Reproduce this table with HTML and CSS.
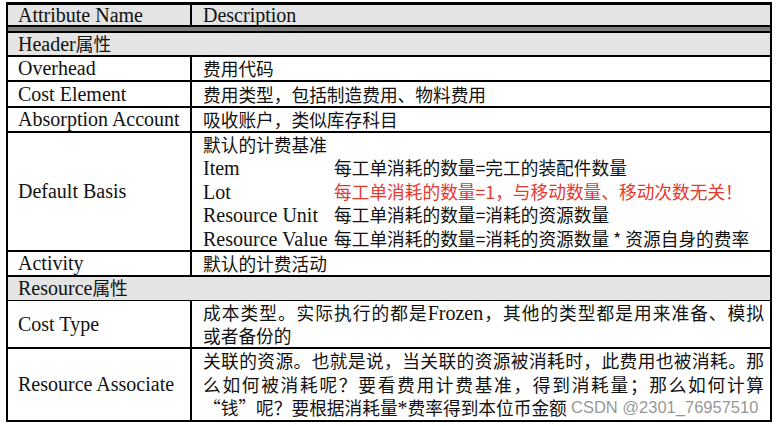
FILE: index.html
```html
<!DOCTYPE html>
<html lang="zh-CN">
<head>
<meta charset="utf-8">
<title>Attribute table</title>
<link rel="stylesheet" href="styles.css">
</head>
<body>
<div class="page">
  <div class="tbl">
    <div class="row head">
      <div class="c1">Attribute Name</div>
      <div class="c2 hd">Description</div>
    </div>
    <div class="sep"></div>
    <div class="row group first h22"><div class="full">Header<span class="zh">属性</span></div></div>
    <div class="row h23"><div class="c1">Overhead</div><div class="c2">费用代码</div></div>
    <div class="row h24"><div class="c1">Cost Element</div><div class="c2">费用类型，包括制造费用、物料费用</div></div>
    <div class="row h23"><div class="c1">Absorption Account</div><div class="c2">吸收账户，类似库存科目</div></div>
    <div class="row basis">
      <div class="c1">Default Basis</div>
      <div class="c2">
        <div>默认的计费基准</div>
        <div class="sub"><span class="lbl en">Item</span><span>每工单消耗的数量=完工的装配件数量</span></div>
        <div class="sub"><span class="lbl en">Lot</span><span class="red">每工单消耗的数量=1，与移动数量、移动次数无关！</span></div>
        <div class="sub"><span class="lbl en">Resource Unit</span><span>每工单消耗的数量=消耗的资源数量</span></div>
        <div class="sub"><span class="lbl en">Resource Value</span><span>每工单消耗的数量=消耗的资源数量 * 资源自身的费率</span></div>
      </div>
    </div>
    <div class="row h23"><div class="c1">Activity</div><div class="c2">默认的计费活动</div></div>
    <div class="row group h23"><div class="full">Resource<span class="zh">属性</span></div></div>
    <div class="row thin h46">
      <div class="c1">Cost Type</div>
      <div class="c2">
        <div class="just">成本类型。实际执行的都是<span class="en">Frozen</span>，其他的类型都是用来准备、模拟</div>
        <div>或者备份的</div>
      </div>
    </div>
    <div class="row assoc">
      <div class="c1">Resource Associate</div>
      <div class="c2">
        <div class="just">关联的资源。也就是说，当关联的资源被消耗时，此费用也被消耗。那</div>
        <div class="just">么如何被消耗呢？要看费用计费基准，得到消耗量；那么如何计算</div>
        <div>“钱”呢？要根据消耗量<span class="en">*</span>费率得到本位币金额</div>
      </div>
    </div>
  </div>
  <div class="wm">CSDN @2301_76957510</div>
</div>
</body>
</html>
```

FILE: styles.css
```css
html, body {
  margin: 0;
  background: #fff;
}
body {
  padding: 2px 0 0 6px;
}
.page {
  position: relative;
  width: 766px;
}
.tbl {
  box-sizing: border-box;
  width: 766px;
  border: 2px solid #000;
  border-top-width: 3px;
  font-family: "Liberation Serif", "Noto Sans CJK SC", serif;
  color: #111;
}
.row {
  display: grid;
  grid-template-columns: 184px 1fr;
  border-top: 2px solid #000;
}
.row.first, .row.head {
  border-top: 0;
}
.row.thin {
  border-top-width: 1px;
}
.h22 { height: 22px; }
.h23 { height: 23px; }
.h24 { height: 24px; }
.h46 { height: 46px; }
.c1 {
  border-right: 2px solid #000;
  padding-left: 10px;
  font-size: 20px;
  line-height: 23px;
  display: flex;
  align-items: center;
  white-space: nowrap;
}
.c2 {
  padding: 0 6px 0 11px;
  font-family: "Noto Sans CJK SC", "Liberation Serif", sans-serif;
  font-size: 17.7px;
  line-height: 23px;
  display: flex;
  flex-direction: column;
  justify-content: center;
}
.en {
  font-family: "Liberation Serif", serif;
  font-size: 20px;
  line-height: 20px;
}
.c2.hd {
  font-family: "Liberation Serif", serif;
  font-size: 20px;
}
.zh {
  font-family: "Noto Sans CJK SC", sans-serif;
  font-size: 17.7px;
  line-height: 20px;
}
.head {
  height: 20px;
  background: #e4e4e4;
}
.head .c1, .head .c2 {
  line-height: 20px;
}
.sep {
  height: 4px;
  background: #7f7f7f;
  border-top: 2px solid #000;
  border-bottom: 2px solid #000;
}
.group {
  display: flex;
  align-items: center;
  background: #e4e4e4;
}
.group .full {
  padding-left: 10px;
  font-size: 20px;
  line-height: 23px;
}
.basis {
  height: 117px;
}
.basis .c2 {
  line-height: 23.4px;
}
.sub {
  display: flex;
  align-items: baseline;
  white-space: nowrap;
}
.lbl {
  min-width: 131px;
}
.red {
  color: #e6392d;
}
.assoc {
  height: 71px;
}
.assoc .c2 {
  line-height: 23.6px;
}
.just {
  text-align: justify;
  text-align-last: justify;
}
.wm {
  position: absolute;
  left: 565px;
  top: 397px;
  font-family: "Liberation Sans", sans-serif;
  font-size: 16.5px;
  line-height: 16.5px;
  color: rgba(130, 130, 130, 0.85);
  white-space: nowrap;
}
```
